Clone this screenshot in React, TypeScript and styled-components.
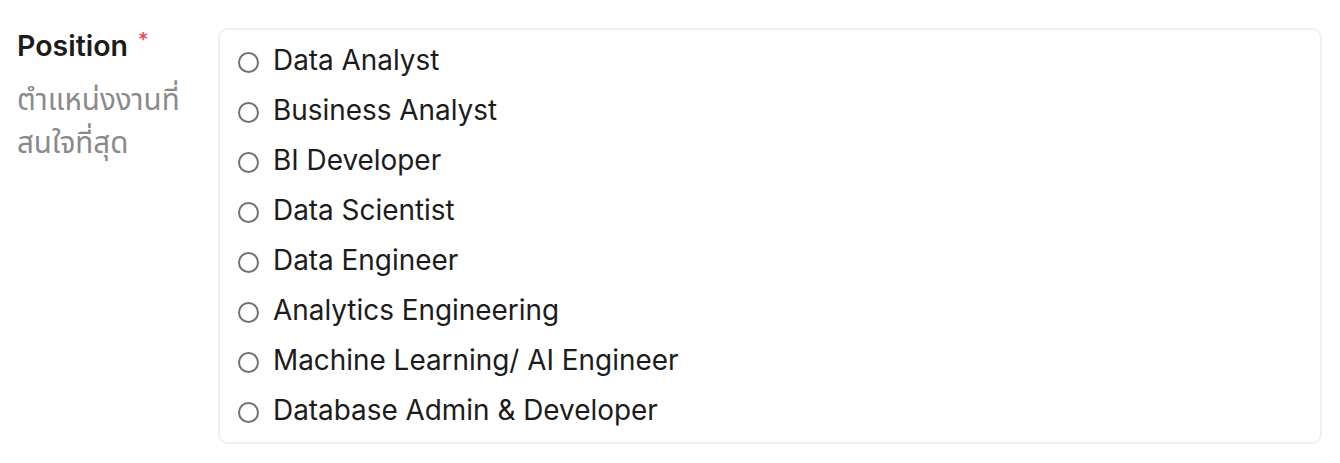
import React from "react";
import styled, { createGlobalStyle } from "styled-components";

const Global = createGlobalStyle`
  html, body { margin: 0; padding: 0; background: #fff; }
  body { font-family: Inter, "Noto Sans", sans-serif; color: #1f1f1f; }
`;

const Page = styled.div`
  display: flex;
  align-items: flex-start;
  padding: 28px 18px 0 17px;
`;

const LabelCol = styled.div`
  width: 201px;
  flex-shrink: 0;
`;

const Title = styled.div`
  font-size: 28.5px;
  font-weight: 600;
  line-height: 36px;
  color: #1c1c1c;
  display: flex;
  align-items: flex-start;
`;

const Star = styled.span`
  color: #e5484d;
  font-size: 20px;
  line-height: 20px;
  margin-left: 10px;
  margin-top: 2px;
  font-weight: 500;
`;

const Hint = styled.div`
  margin-top: 14px;
  max-width: 185px;
  font-size: 29.5px;
  line-height: 43px;
  color: #8a8a8a;
  font-family: Inter, "Noto Sans", "Noto Sans Thai", sans-serif;
`;

const Box = styled.div`
  flex: 1;
  border: 2px solid #f0f0f0;
  border-radius: 10px;
  padding: 5px 18px 7px;
  display: flex;
  flex-direction: column;
`;

const Option = styled.label`
  display: flex;
  align-items: center;
  height: 50px;
  gap: 14px;
  font-size: 27.9px;
  color: #1c1c1c;
  cursor: pointer;
`;

const Radio = styled.span`
  box-sizing: border-box;
  width: 21px;
  height: 21px;
  border: 2px solid #727272;
  border-radius: 50%;
  flex-shrink: 0;
  margin-top: 4px;
`;

const options = [
  "Data Analyst",
  "Business Analyst",
  "BI Developer",
  "Data Scientist",
  "Data Engineer",
  "Analytics Engineering",
  "Machine Learning/ AI Engineer",
  "Database Admin & Developer",
];

export default function App() {
  return (
    <>
      <Global />
      <Page>
        <LabelCol>
          <Title>
            Position<Star>*</Star>
          </Title>
          <Hint>ตำแหน่งงานที่สนใจที่สุด</Hint>
        </LabelCol>
        <Box>
          {options.map((o) => (
            <Option key={o}>
              <Radio />
              {o}
            </Option>
          ))}
        </Box>
      </Page>
    </>
  );
}
